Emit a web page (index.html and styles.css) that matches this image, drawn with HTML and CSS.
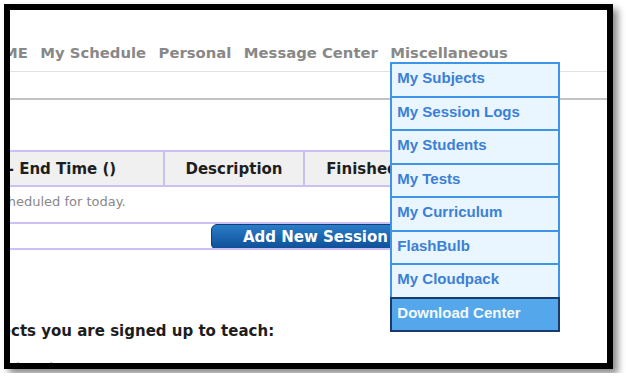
FILE: index.html
```html
<!DOCTYPE html>
<html lang="en">
<head>
  <meta charset="UTF-8">
  <title>Tutor Schedule</title>
  <link rel="stylesheet" href="styles.css">
</head>
<body>
  <div class="frame">
    <div class="topnav">
      <ul class="nav-items">
        <li>HOME</li>
        <li>My Schedule</li>
        <li>Personal</li>
        <li>Message Center</li>
        <li class="has-menu">Miscellaneous
          <ul class="submenu">
            <li>My Subjects</li>
            <li>My Session Logs</li>
            <li>My Students</li>
            <li>My Tests</li>
            <li>My Curriculum</li>
            <li>FlashBulb</li>
            <li>My Cloudpack</li>
            <li class="active">Download Center</li>
          </ul>
        </li>
      </ul>
    </div>
    <div class="subbar"></div>

    <table class="sessions">
      <colgroup>
        <col class="col-time">
        <col class="col-desc">
        <col class="col-done">
      </colgroup>
      <tr>
        <th class="first">Start - End Time ()</th>
        <th>Description</th>
        <th>Finished</th>
      </tr>
      <tr class="empty-row">
        <td colspan="3">No sessions scheduled for today.</td>
      </tr>
      <tr class="button-row">
        <td colspan="3"><button class="add-btn">Add New Session</button></td>
      </tr>
    </table>

    <h3 class="subjects-title">Subjects you are signed up to teach:</h3>
    <p class="subjects-none">(none)</p>
  </div>
</body>
</html>
```

FILE: styles.css
```css
body {
  margin: 0;
  padding: 4px;
  background: #fff;
}
.frame {
  width: 609px;
  height: 365px;
  box-sizing: border-box;
  border: 6px solid #000;
  overflow: hidden;
  position: relative;
  background: #fff;
  box-shadow: 5px 5px 7px rgba(0,0,0,0.45);
  font-family: 'DejaVu Sans', Verdana, sans-serif;
}
.topnav {
  padding: 34px 0 10px 0;
  border-bottom: 1px solid #e2e2e2;
}
.nav-items {
  display: flex;
  gap: 12.5px;
  margin: 0 0 0 -32px;
  padding: 0;
  list-style: none;
  white-space: nowrap;
  font-size: 14.8px;
  font-weight: bold;
  line-height: 17px;
  color: #888;
}
.nav-items li {
  position: relative;
}
.submenu {
  position: absolute;
  top: calc(100% + 1px);
  left: 0;
  width: 170px;
  margin: 0;
  padding: 0;
  list-style: none;
  font-family: 'Liberation Sans', Arial, sans-serif;
  font-size: 15px;
}
.submenu li {
  border: 2px solid #3e95e8;
  background: #e9f5ff;
  color: #3b7fd6;
  line-height: 28px;
  padding: 0 0 3.5px 5px;
}
.submenu li + li {
  margin-top: -2px;
}
.submenu li.active {
  background: #54a7ea;
  color: #f4f9ff;
  border-color: #183a6c;
  z-index: 1;
}
.subbar {
  height: 26px;
  border-bottom: 2px solid #c3c3c3;
}
.sessions {
  margin: 50px 0 0 -107px;
  border-collapse: collapse;
  table-layout: fixed;
  width: 516px;
}
.col-time { width: 260px; }
.col-desc { width: 140px; }
.col-done { width: 116px; }
.sessions th {
  background: #f0f0f0;
  border: 2px solid #cbbff4;
  padding: 2px 0 0 0;
  font-size: 15px;
  font-weight: bold;
  line-height: 31px;
  color: #1e1e1e;
  text-align: center;
  white-space: nowrap;
}
.sessions th.first {
  padding-left: 8px;
}
.sessions td {
  border-bottom: 2px solid #cbbff4;
  padding: 0;
}
.empty-row td {
  padding: 6px 0 12px 9px;
  font-size: 13px;
  line-height: 17px;
  color: #888;
}
.add-btn {
  display: block;
  height: 26px;
  margin: 0 0 -2px auto;
  padding: 0 31px;
  border: 1px solid #0a3f7d;
  border-radius: 6px;
  background: linear-gradient(#2b7cc7, #0d4f97);
  color: #fff;
  font: bold 15px 'DejaVu Sans', Verdana, sans-serif;
  white-space: nowrap;
}
.subjects-title {
  margin: 72px 0 0 -46.5px;
  font-size: 15px;
  line-height: 18px;
  font-weight: bold;
  color: #1d1d1d;
  white-space: nowrap;
}
.subjects-none {
  margin: 21px 0 0 5px;
  font-size: 12px;
  color: #7a8fb0;
}
```
